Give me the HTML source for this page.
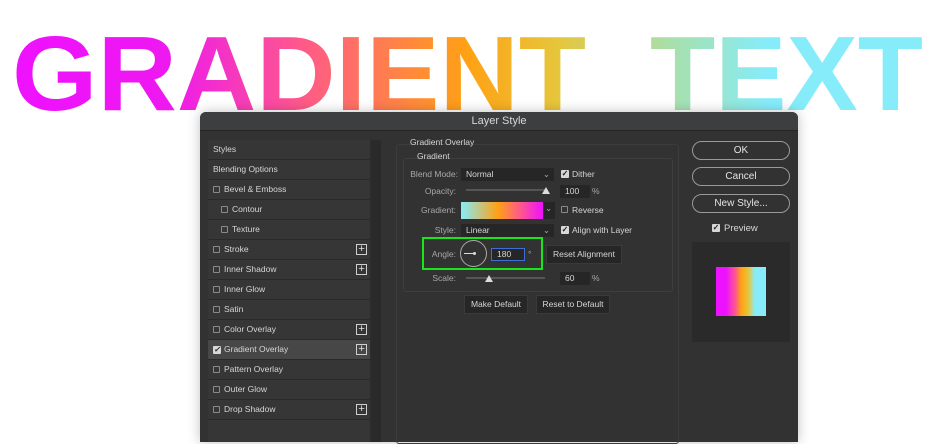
<!DOCTYPE html>
<html><head><style>
*{margin:0;padding:0;box-sizing:border-box}
body{width:951px;height:430px;background:#fff;position:relative;overflow:hidden;font-family:"Liberation Sans",sans-serif}
.a{position:absolute}
.dlg{left:200px;top:112px;width:598px;height:330px;background:#323232;border-radius:6px 6px 0 0;box-shadow:0 0 12px rgba(0,0,0,.25)}
.title{left:0;top:0;width:598px;height:19px;background:#3d3e40;border-radius:6px 6px 0 0;color:#d8d8d8;font-size:11px;text-align:center;line-height:19px;border-bottom:1px solid #262626}
.t{color:#d6d6d6;font-size:8.5px;white-space:nowrap}
.lbl{color:#a8a8a8;font-size:8.5px;text-align:right;white-space:nowrap}
.row{left:8px;width:162px;height:20px;border-bottom:1px solid #2a2a2a;background:#363636}
.row span{position:absolute;top:4px;color:#d6d6d6;font-size:8.5px;white-space:nowrap}
.cb{position:absolute;width:7px;height:7px;border:1px solid #8a8a8a;border-radius:1px;top:6px}
.plus{position:absolute;right:3px;top:4px;width:11px;height:11px;border:1px solid #cfcfcf;color:#e0e0e0;font-size:11px;line-height:8px;text-align:center}
.fld{background:#262626;height:13px;color:#d6d6d6;font-size:8.5px;line-height:13px;padding-left:5px}
.btn{background:#262626;border:1px solid #3a3a3a;color:#d6d6d6;font-size:8.5px;text-align:center;line-height:17px;height:19px}
.rb{left:492px;width:98px;height:19px;border:1.3px solid #9a9a9a;border-radius:10px;color:#e4e4e4;font-size:10px;text-align:center;line-height:17px}
.chk{width:8px;height:8px;background:#d8d8d8;border-radius:1px;color:#222;font-size:8px;line-height:8px;text-align:center;font-weight:bold}
</style></head><body>
<svg class="a" style="left:0;top:0" width="951" height="115">
<defs><linearGradient id="g" x1="12" x2="923" y1="0" y2="0" gradientUnits="userSpaceOnUse">
<stop offset="0" stop-color="#ee11ff"/><stop offset="0.17" stop-color="#ee18f0"/><stop offset="0.33" stop-color="#ff5e82"/><stop offset="0.5" stop-color="#ffa114"/><stop offset="0.6" stop-color="#e6c63c"/><stop offset="0.72" stop-color="#a9dfa8"/><stop offset="0.83" stop-color="#86ecfa"/><stop offset="1" stop-color="#86ecfa"/></linearGradient></defs>
<text x="12" y="110" font-family="Liberation Sans" font-weight="bold" font-size="106" textLength="574" lengthAdjust="spacingAndGlyphs" fill="url(#g)">GRADIENT</text>
<text x="650" y="110" font-family="Liberation Sans" font-weight="bold" font-size="106" textLength="273" lengthAdjust="spacingAndGlyphs" fill="url(#g)">TEXT</text>
</svg>
<div class="a dlg">
<div class="a title">Layer Style</div>
<div class="a" style="left:8px;top:28px;width:163px;height:302px;background:#2d2d2d"></div>
<div class="a" style="left:171px;top:28px;width:10px;height:302px;background:#2a2a2a"></div>
<div class="a row" style="top:28px"><span style="left:5px">Styles</span></div>
<div class="a row" style="top:48px"><span style="left:5px">Blending Options</span></div>
<div class="a row" style="top:68px"><i class="cb" style="left:5px"></i><span style="left:16px">Bevel &amp; Emboss</span></div>
<div class="a row" style="top:88px"><i class="cb" style="left:13px"></i><span style="left:24px">Contour</span></div>
<div class="a row" style="top:108px"><i class="cb" style="left:13px"></i><span style="left:24px">Texture</span></div>
<div class="a row" style="top:128px"><i class="cb" style="left:5px"></i><span style="left:16px">Stroke</span><i class="plus">+</i></div>
<div class="a row" style="top:148px"><i class="cb" style="left:5px"></i><span style="left:16px">Inner Shadow</span><i class="plus">+</i></div>
<div class="a row" style="top:168px"><i class="cb" style="left:5px"></i><span style="left:16px">Inner Glow</span></div>
<div class="a row" style="top:188px"><i class="cb" style="left:5px"></i><span style="left:16px">Satin</span></div>
<div class="a row" style="top:208px"><i class="cb" style="left:5px"></i><span style="left:16px">Color Overlay</span><i class="plus">+</i></div>
<div class="a row" style="top:228px;background:#474747"><i class="cb chk" style="left:5px;border:none">✓</i><span style="left:16px">Gradient Overlay</span><i class="plus">+</i></div>
<div class="a row" style="top:248px"><i class="cb" style="left:5px"></i><span style="left:16px">Pattern Overlay</span></div>
<div class="a row" style="top:268px"><i class="cb" style="left:5px"></i><span style="left:16px">Outer Glow</span></div>
<div class="a row" style="top:288px"><i class="cb" style="left:5px"></i><span style="left:16px">Drop Shadow</span><i class="plus">+</i></div>
<div class="a row" style="top:308px;height:22px;border:none"></div>

<div class="a" style="left:196px;top:32px;width:283px;height:300px;border:1px solid #3c3c3c;border-radius:3px"></div>
<div class="a t" style="left:210px;top:25px">Gradient Overlay</div>
<div class="a" style="left:203px;top:46px;width:270px;height:134px;border:1px solid #3e3e3e;border-radius:3px"></div>
<div class="a t" style="left:217px;top:39px">Gradient</div>
<div class="a lbl" style="left:190px;width:68px;top:57px">Blend Mode:</div>
<div class="a fld" style="left:261px;top:56px;width:93px">Normal<span style="position:absolute;right:4px;color:#aaa">⌄</span></div>
<div class="a chk" style="left:361px;top:58px">✓</div><div class="a t" style="left:372px;top:57px">Dither</div>
<div class="a lbl" style="left:190px;width:66px;top:74px">Opacity:</div>
<div class="a" style="left:266px;top:77px;width:80px;height:2px;background:#555"></div>
<div class="a" style="left:342px;top:75px;width:0;height:0;border-left:4px solid transparent;border-right:4px solid transparent;border-bottom:7px solid #ddd"></div>
<div class="a fld" style="left:360px;top:73px;width:30px">100</div><div class="a lbl" style="left:392px;top:74px">%</div>
<div class="a lbl" style="left:190px;width:66px;top:93px">Gradient:</div>
<div class="a" style="left:261px;top:90px;width:82px;height:17px;background:linear-gradient(90deg,#86ecfa,#ffa114 45%,#ff5e82 70%,#ee11ff)"></div>
<div class="a fld" style="left:343px;top:90px;width:12px;height:17px;padding:0 0 0 2px;color:#aaa">⌄</div>
<div class="a cb" style="left:361px;top:94px;position:absolute"></div><div class="a t" style="left:372px;top:93px">Reverse</div>
<div class="a lbl" style="left:190px;width:66px;top:113px">Style:</div>
<div class="a fld" style="left:261px;top:112px;width:93px">Linear<span style="position:absolute;right:4px;color:#aaa">⌄</span></div>
<div class="a chk" style="left:361px;top:114px">✓</div><div class="a t" style="left:372px;top:113px">Align with Layer</div>
<div class="a" style="left:222px;top:125px;width:121px;height:33px;border:2px solid #19e619"></div>
<div class="a lbl" style="left:222px;width:34px;top:137px">Angle:</div>
<div class="a" style="left:260px;top:128px;width:27px;height:27px;border:1px solid #aaa;border-radius:50%"></div>
<div class="a" style="left:264px;top:141px;width:10px;height:1px;background:#ddd"></div>
<div class="a" style="left:273px;top:140px;width:3px;height:3px;background:#ddd;border-radius:50%"></div>
<div class="a fld" style="left:291px;top:136px;width:34px;border:1px solid #3b6fd4;line-height:11px">180</div>
<div class="a lbl" style="left:328px;top:137px">°</div>
<div class="a btn" style="left:346px;top:133px;width:76px">Reset Alignment</div>
<div class="a lbl" style="left:190px;width:66px;top:161px">Scale:</div>
<div class="a" style="left:266px;top:165px;width:79px;height:2px;background:#555"></div>
<div class="a" style="left:285px;top:163px;width:0;height:0;border-left:4px solid transparent;border-right:4px solid transparent;border-bottom:7px solid #ddd"></div>
<div class="a fld" style="left:360px;top:160px;width:30px">60</div><div class="a lbl" style="left:392px;top:161px">%</div>
<div class="a btn" style="left:264px;top:183px;width:64px">Make Default</div>
<div class="a btn" style="left:336px;top:183px;width:74px">Reset to Default</div>

<div class="a rb" style="top:29px">OK</div>
<div class="a rb" style="top:55px">Cancel</div>
<div class="a rb" style="top:82px">New Style...</div>
<div class="a chk" style="left:512px;top:112px">✓</div><div class="a t" style="left:524px;top:111px;font-size:9.5px">Preview</div>
<div class="a" style="left:492px;top:130px;width:98px;height:100px;background:#2a2a2a"></div>
<div class="a" style="left:516px;top:155px;width:50px;height:49px;background:linear-gradient(90deg,#ee11ff 20%,#ff5e82 40%,#ffa114 50%,#e6c63c 65%,#86ecfa 78%)"></div>
</div>
</body></html>
